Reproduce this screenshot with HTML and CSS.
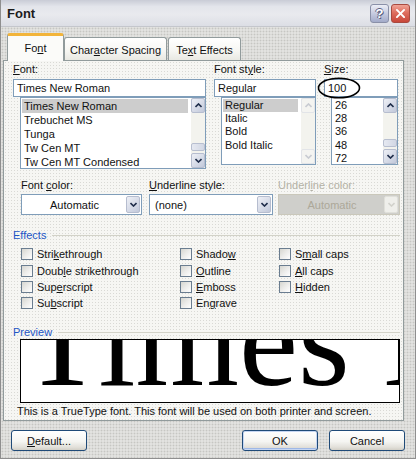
FILE: index.html
```html
<!DOCTYPE html>
<html>
<head>
<meta charset="utf-8">
<title>Font</title>
<link rel="stylesheet" href="styles.css">
</head>
<body>
<div class="window">
  <div class="titlebar">
    <span class="title">Font</span>
    <span class="cbtn help">?</span>
    <span class="cbtn close"><svg width="19" height="19" viewBox="0 0 19 19"><path d="M5.5 5.5 L13.5 13.5 M13.5 5.5 L5.5 13.5" stroke="#fff" stroke-width="2.2" stroke-linecap="round"/></svg></span>
  </div>
  <div class="client">
    <div class="tabs">
      <div class="tab active"><span>Fo</span><u>n</u><span>t</span></div>
      <div class="tab t2"><span>Char</span><u>a</u><span>cter Spacing</span></div>
      <div class="tab t3"><span>Te</span><u>x</u><span>t Effects</span></div>
    </div>
    <div class="panel">
      <div class="row1">
        <div class="col">
          <div class="lbl"><u>F</u><span>ont:</span></div>
          <div class="input">Times New Roman</div>
          <div class="list list-font">
            <div class="items">
              <div class="item sel">Times New Roman</div>
              <div class="item">Trebuchet MS</div>
              <div class="item">Tunga</div>
              <div class="item">Tw Cen MT</div>
              <div class="item">Tw Cen MT Condensed</div>
            </div>
            <div class="sbar">
              <div class="sbtn"><svg width="7" height="5" viewBox="0 0 7 5"><path d="M0.5 4 L3.5 1 L6.5 4" fill="none" stroke="#1f2d4a" stroke-width="1.6"/></svg></div>
              <div class="strack"><div class="thumb"></div></div>
              <div class="sbtn"><svg width="7" height="5" viewBox="0 0 7 5"><path d="M0.5 1 L3.5 4 L6.5 1" fill="none" stroke="#1f2d4a" stroke-width="1.6"/></svg></div>
            </div>
          </div>
        </div>
        <div class="col">
          <div class="lbl"><span>Font st</span><u>y</u><span>le:</span></div>
          <div class="input">Regular</div>
          <div class="list list-small">
            <div class="items">
              <div class="item sel">Regular</div>
              <div class="item">Italic</div>
              <div class="item">Bold</div>
              <div class="item">Bold Italic</div>
            </div>
            <div class="sbar disabled">
              <div class="sbtn"><svg width="7" height="5" viewBox="0 0 7 5"><path d="M0.5 4 L3.5 1 L6.5 4" fill="none" stroke="#c8cbd2" stroke-width="1.6"/></svg></div>
              <div class="strack"></div>
              <div class="sbtn"><svg width="7" height="5" viewBox="0 0 7 5"><path d="M0.5 1 L3.5 4 L6.5 1" fill="none" stroke="#c8cbd2" stroke-width="1.6"/></svg></div>
            </div>
          </div>
        </div>
        <div class="col size-col">
          <div class="lbl"><u>S</u><span>ize:</span></div>
          <div class="input">100</div>
          <div class="list list-small">
            <div class="items">
              <div class="item">26</div>
              <div class="item">28</div>
              <div class="item">36</div>
              <div class="item">48</div>
              <div class="item">72</div>
            </div>
            <div class="sbar">
              <div class="sbtn"><svg width="7" height="5" viewBox="0 0 7 5"><path d="M0.5 4 L3.5 1 L6.5 4" fill="none" stroke="#1f2d4a" stroke-width="1.6"/></svg></div>
              <div class="strack"><div class="thumb"></div></div>
              <div class="sbtn"><svg width="7" height="5" viewBox="0 0 7 5"><path d="M0.5 1 L3.5 4 L6.5 1" fill="none" stroke="#1f2d4a" stroke-width="1.6"/></svg></div>
            </div>
          </div>
          <svg class="circle" width="44" height="22" viewBox="0 0 44 22"><ellipse cx="22" cy="11" rx="20.5" ry="9.8" fill="none" stroke="#000" stroke-width="1.6"/></svg>
        </div>
      </div>

      <div class="row2">
        <div class="col">
          <div class="lbl"><span>Font&#160;</span><u>c</u><span>olor:</span></div>
          <div class="combo">
            <span class="ctext center">Automatic</span>
            <span class="dbtn"><svg width="7" height="5" viewBox="0 0 7 5"><path d="M0.5 1 L3.5 4 L6.5 1" fill="none" stroke="#1f2d4a" stroke-width="1.6"/></svg></span>
          </div>
        </div>
        <div class="col">
          <div class="lbl"><u>U</u><span>nderline style:</span></div>
          <div class="combo">
            <span class="ctext">(none)</span>
            <span class="dbtn"><svg width="7" height="5" viewBox="0 0 7 5"><path d="M0.5 1 L3.5 4 L6.5 1" fill="none" stroke="#1f2d4a" stroke-width="1.6"/></svg></span>
          </div>
        </div>
        <div class="col">
          <div class="lbl dis"><span>Underl</span><u>i</u><span>ne color:</span></div>
          <div class="combo disabled">
            <span class="ctext center">Automatic</span>
            <span class="dbtn"><svg width="7" height="5" viewBox="0 0 7 5"><path d="M0.5 1 L3.5 4 L6.5 1" fill="none" stroke="#d2d2cc" stroke-width="1.6"/></svg></span>
          </div>
        </div>
      </div>

      <div class="ghead gh-effects"><span>Effects</span><i></i></div>
      <div class="effects">
        <div class="chk"><span class="box"></span><span>Stri</span><u>k</u><span>ethrough</span></div>
        <div class="chk"><span class="box"></span><span>Shado</span><u>w</u></div>
        <div class="chk"><span class="box"></span><span>S</span><u>m</u><span>all caps</span></div>
        <div class="chk"><span class="box"></span><span>Doub</span><u>l</u><span>e strikethrough</span></div>
        <div class="chk"><span class="box"></span><u>O</u><span>utline</span></div>
        <div class="chk"><span class="box"></span><u>A</u><span>ll caps</span></div>
        <div class="chk"><span class="box"></span><span>Sup</span><u>e</u><span>rscript</span></div>
        <div class="chk"><span class="box"></span><u>E</u><span>mboss</span></div>
        <div class="chk"><span class="box"></span><u>H</u><span>idden</span></div>
        <div class="chk"><span class="box"></span><span>Su</span><u>b</u><span>script</span></div>
        <div class="chk"><span class="box"></span><span>En</span><u>g</u><span>rave</span></div>
      </div>

      <div class="ghead gh-preview"><span>Preview</span><i></i></div>
      <div class="preview-wrap">
        <div class="preview"><div class="preview-text">Times New Roman</div></div>
      </div>
      <div class="note">This is a TrueType font. This font will be used on both printer and screen.</div>
    </div>

    <div class="buttons">
      <div class="btn"><u>D</u><span>efault...</span></div>
      <div class="btn ok"><span>OK</span></div>
      <div class="btn cancel"><span>Cancel</span></div>
    </div>
  </div>
</div>
</body>
</html>
```

FILE: styles.css
```css
* { box-sizing: border-box; }
html, body { margin: 0; padding: 0; }
body {
  font-family: "Liberation Sans", Arial, sans-serif;
  font-size: 11px;
  color: #111;
  background: #ffffff;
}
u { text-decoration: underline; text-underline-offset: 1px; white-space: pre; }

.window {
  width: 416px;
  height: 459px;
  display: flex;
  flex-direction: column;
  border-left: 1px solid #8f8f8f;
  border-right: 1px solid #8f8f8f;
  border-bottom: 1px solid #8f8f8f;
  background-color: #e2e2e0;
  background-image: radial-gradient(circle, #c6c6c3 0.8px, transparent 1.1px);
  background-size: 3px 3px;
}

/* ---------- title bar ---------- */
.titlebar {
  height: 27px;
  flex: none;
  display: flex;
  align-items: center;
  padding: 0 5px 0 6px;
  background: linear-gradient(180deg, #c9ccd6 0%, #e3e5eb 25%, #e9eaee 55%, #dcdee5 100%);
  border-bottom: 1px solid #c4c6cc;
}
.title {
  font-weight: bold;
  font-size: 13px;
  color: #1c1c1c;
  margin-right: auto;
}
.cbtn {
  width: 19px;
  height: 19px;
  border-radius: 3px;
  display: flex;
  align-items: center;
  justify-content: center;
}
.help {
  margin-right: 2px;
  border: 1px solid #8a90a8;
  background: linear-gradient(180deg, #eceef6 0%, #c6cbe0 50%, #a3abc9 100%);
  color: #ffffff;
  font-weight: bold;
  font-size: 13px;
  text-shadow: 1px 1px 0 #5a6082, -1px 0 0 #5a6082, 0 -1px 0 #5a6082;
}
.close {
  border: 1px solid #a84a40;
  background: linear-gradient(180deg, #f0a396 0%, #de6e5f 45%, #c8473a 100%);
}

/* ---------- client ---------- */
.client {
  flex: 1;
  display: flex;
  flex-direction: column;
  padding: 0 11px 0 2px;
}

.tabs {
  height: 33px;
  flex: none;
  display: flex;
  align-items: flex-end;
  padding-left: 4px;
}
.tab {
  height: 23px;
  border: 1px solid #919b9c;
  border-bottom: none;
  border-radius: 3px 3px 0 0;
  background: linear-gradient(180deg, #ffffff 0%, #f6f6f2 60%, #e8e8e2 100%);
  display: flex;
  align-items: center;
  justify-content: center;
  padding-top: 1px;
  white-space: pre;
}
.tab.active {
  width: 57px;
  height: 28px;
  margin-bottom: -1px;
  position: relative;
  z-index: 1;
  border-top: 3px solid #f2b43a;
  background: #fbfbf9;
  padding-top: 0;
  padding-bottom: 1px;
}
.tab.t2 { width: 103px; }
.tab.t3 { width: 73px; margin-left: 1px; }

.panel {
  height: 361px;
  flex: none;
  display: block;
  border: 1px solid #919b9c;
  padding: 2px 0 0 9px;
  background-color: #f6f6f3;
  background-image: radial-gradient(circle, #d9d9d5 0.7px, transparent 1px);
  background-size: 3px 3px;
}

.lbl {
  height: 13px;
  line-height: 13px;
  display: flex;
  white-space: pre;
}
.lbl.dis { color: #b4b2a6; }

/* ---------- row 1 ---------- */
.row1 {
  display: grid;
  grid-template-columns: 193px 102px 74px;
  column-gap: 8px;
  align-items: start;
}
.col { display: flex; flex-direction: column; }
.size-col { position: relative; }

.input {
  margin-top: 3px;
  height: 18px;
  border: 1px solid #7f9db9;
  background: #fff;
  padding-left: 3px;
  line-height: 16px;
  white-space: nowrap;
}
.list {
  margin-left: 7px;
  border: 1px solid #7f9db9;
  background: #fff;
  display: flex;
}
.list-font { height: 72px; }
.list-small { height: 68px; }
.items { flex: 1; padding: 1px 3px 0 1px; min-width: 0; }
.item { height: 14px; line-height: 14px; padding-left: 2px; white-space: nowrap; }
.list-small .item { height: 13.2px; line-height: 13.2px; }
.item.sel { background: #cdcdcd; }

.sbar {
  width: 14px;
  flex: none;
  display: flex;
  flex-direction: column;
  background: #f3f3ee;
}
.sbtn {
  height: 15px;
  flex: none;
  border: 1px solid #b6bdcf;
  border-radius: 2px;
  background: linear-gradient(135deg, #eef0f6 0%, #d4d9e6 60%, #c1c8da 100%);
  display: flex;
  align-items: center;
  justify-content: center;
}
.strack { flex: 1; display: flex; flex-direction: column; }
.thumb {
  margin-top: auto;
  margin-bottom: 2px;
  height: 8px;
  border: 1px solid #b8bfd0;
  border-radius: 2px;
  background: linear-gradient(90deg, #e6e9f1, #d2d7e4);
}
.sbar.disabled .sbtn {
  border-color: #e2e4e8;
  background: #f4f4f1;
}

.circle {
  position: absolute;
  left: -7px;
  top: 14px;
}

/* ---------- row 2 ---------- */
.row2 {
  margin-top: 10px;
  padding-left: 8px;
  display: grid;
  grid-template-columns: 121px 124px 120px;
  column-gap: 7px;
}
.row2 .col:nth-child(3) { margin-left: -2px; }
.row2 .lbl { margin-bottom: 2px; }
.combo {
  height: 21px;
  border: 1px solid #7f9db9;
  background: #fff;
  display: flex;
  align-items: center;
  padding: 1px;
}
.ctext { flex: 1; padding-left: 4px; white-space: nowrap; }
.ctext.center { text-align: center; padding-left: 0; }
.dbtn {
  width: 14px;
  height: 17px;
  border: 1px solid #b6bdcf;
  border-radius: 2px;
  background: linear-gradient(135deg, #eef0f6 0%, #d4d9e6 60%, #c1c8da 100%);
  display: flex;
  align-items: center;
  justify-content: center;
}
.combo.disabled {
  border-color: #cac8bb;
  background-color: #e6e6e2;
  background-image: radial-gradient(circle, #cfcfcb 0.7px, transparent 1px);
  background-size: 2px 2px;
  color: #aca899;
}
.combo.disabled .dbtn { border-color: #e0e0da; background: #efefeb; }

/* ---------- group headers ---------- */
.ghead {
  height: 13px;
  display: flex;
  align-items: center;
  margin-right: 3px;
  color: #2154c4;
}
.ghead span { line-height: 13px; }
.ghead i {
  flex: 1;
  height: 0;
  border-top: 1px solid #d2d2c8;
  margin-left: 6px;
}
.gh-effects { margin-top: 14px; }
.gh-preview { margin-top: 14px; }

/* ---------- effects ---------- */
.effects {
  margin-top: 4px;
  padding-left: 8px;
  display: grid;
  grid-template-columns: 159px 99px 100px;
  grid-auto-rows: 16.4px;
}
.chk {
  display: flex;
  align-items: center;
  white-space: pre;
}
.box {
  width: 12px;
  height: 12px;
  border: 1px solid #6a7d90;
  background: linear-gradient(135deg, #d6d6d0 0%, #ececea 50%, #ffffff 100%);
  margin-right: 4px;
  flex: none;
}

/* ---------- preview ---------- */
.preview-wrap {
  padding-left: 7px;
  width: 387px;
}
.preview {
  width: 380px;
  height: 64px;
  border: 1px solid #000;
  background: #fff;
  overflow: hidden;
}
.preview-text {
  width: 378px;
  height: 62px;
  overflow: hidden;
  font-family: "Liberation Serif", "Times New Roman", serif;
  font-size: 133px;
  line-height: 0;
  padding-left: 1px;
  white-space: nowrap;
  color: #000;
}
.note {
  margin-top: 2px;
  margin-left: 4px;
  height: 13px;
  line-height: 13px;
  white-space: nowrap;
}

/* ---------- buttons ---------- */
.buttons {
  display: flex;
  padding: 9px 0 0 8px;
  margin-right: -1px;
}
.btn {
  width: 76px;
  height: 21px;
  border: 1px solid #1f4a78;
  border-radius: 3px;
  background: linear-gradient(180deg, #ffffff 0%, #f5f5f2 55%, #e2e0da 85%, #d2cfc6 100%);
  display: flex;
  align-items: center;
  justify-content: center;
}
.btn.ok {
  margin-left: auto;
  box-shadow: inset 0 0 0 1px #c6d6f2, inset 0 -2px 0 #9fb8e6;
}
.btn.cancel { margin-left: 11px; }
```
